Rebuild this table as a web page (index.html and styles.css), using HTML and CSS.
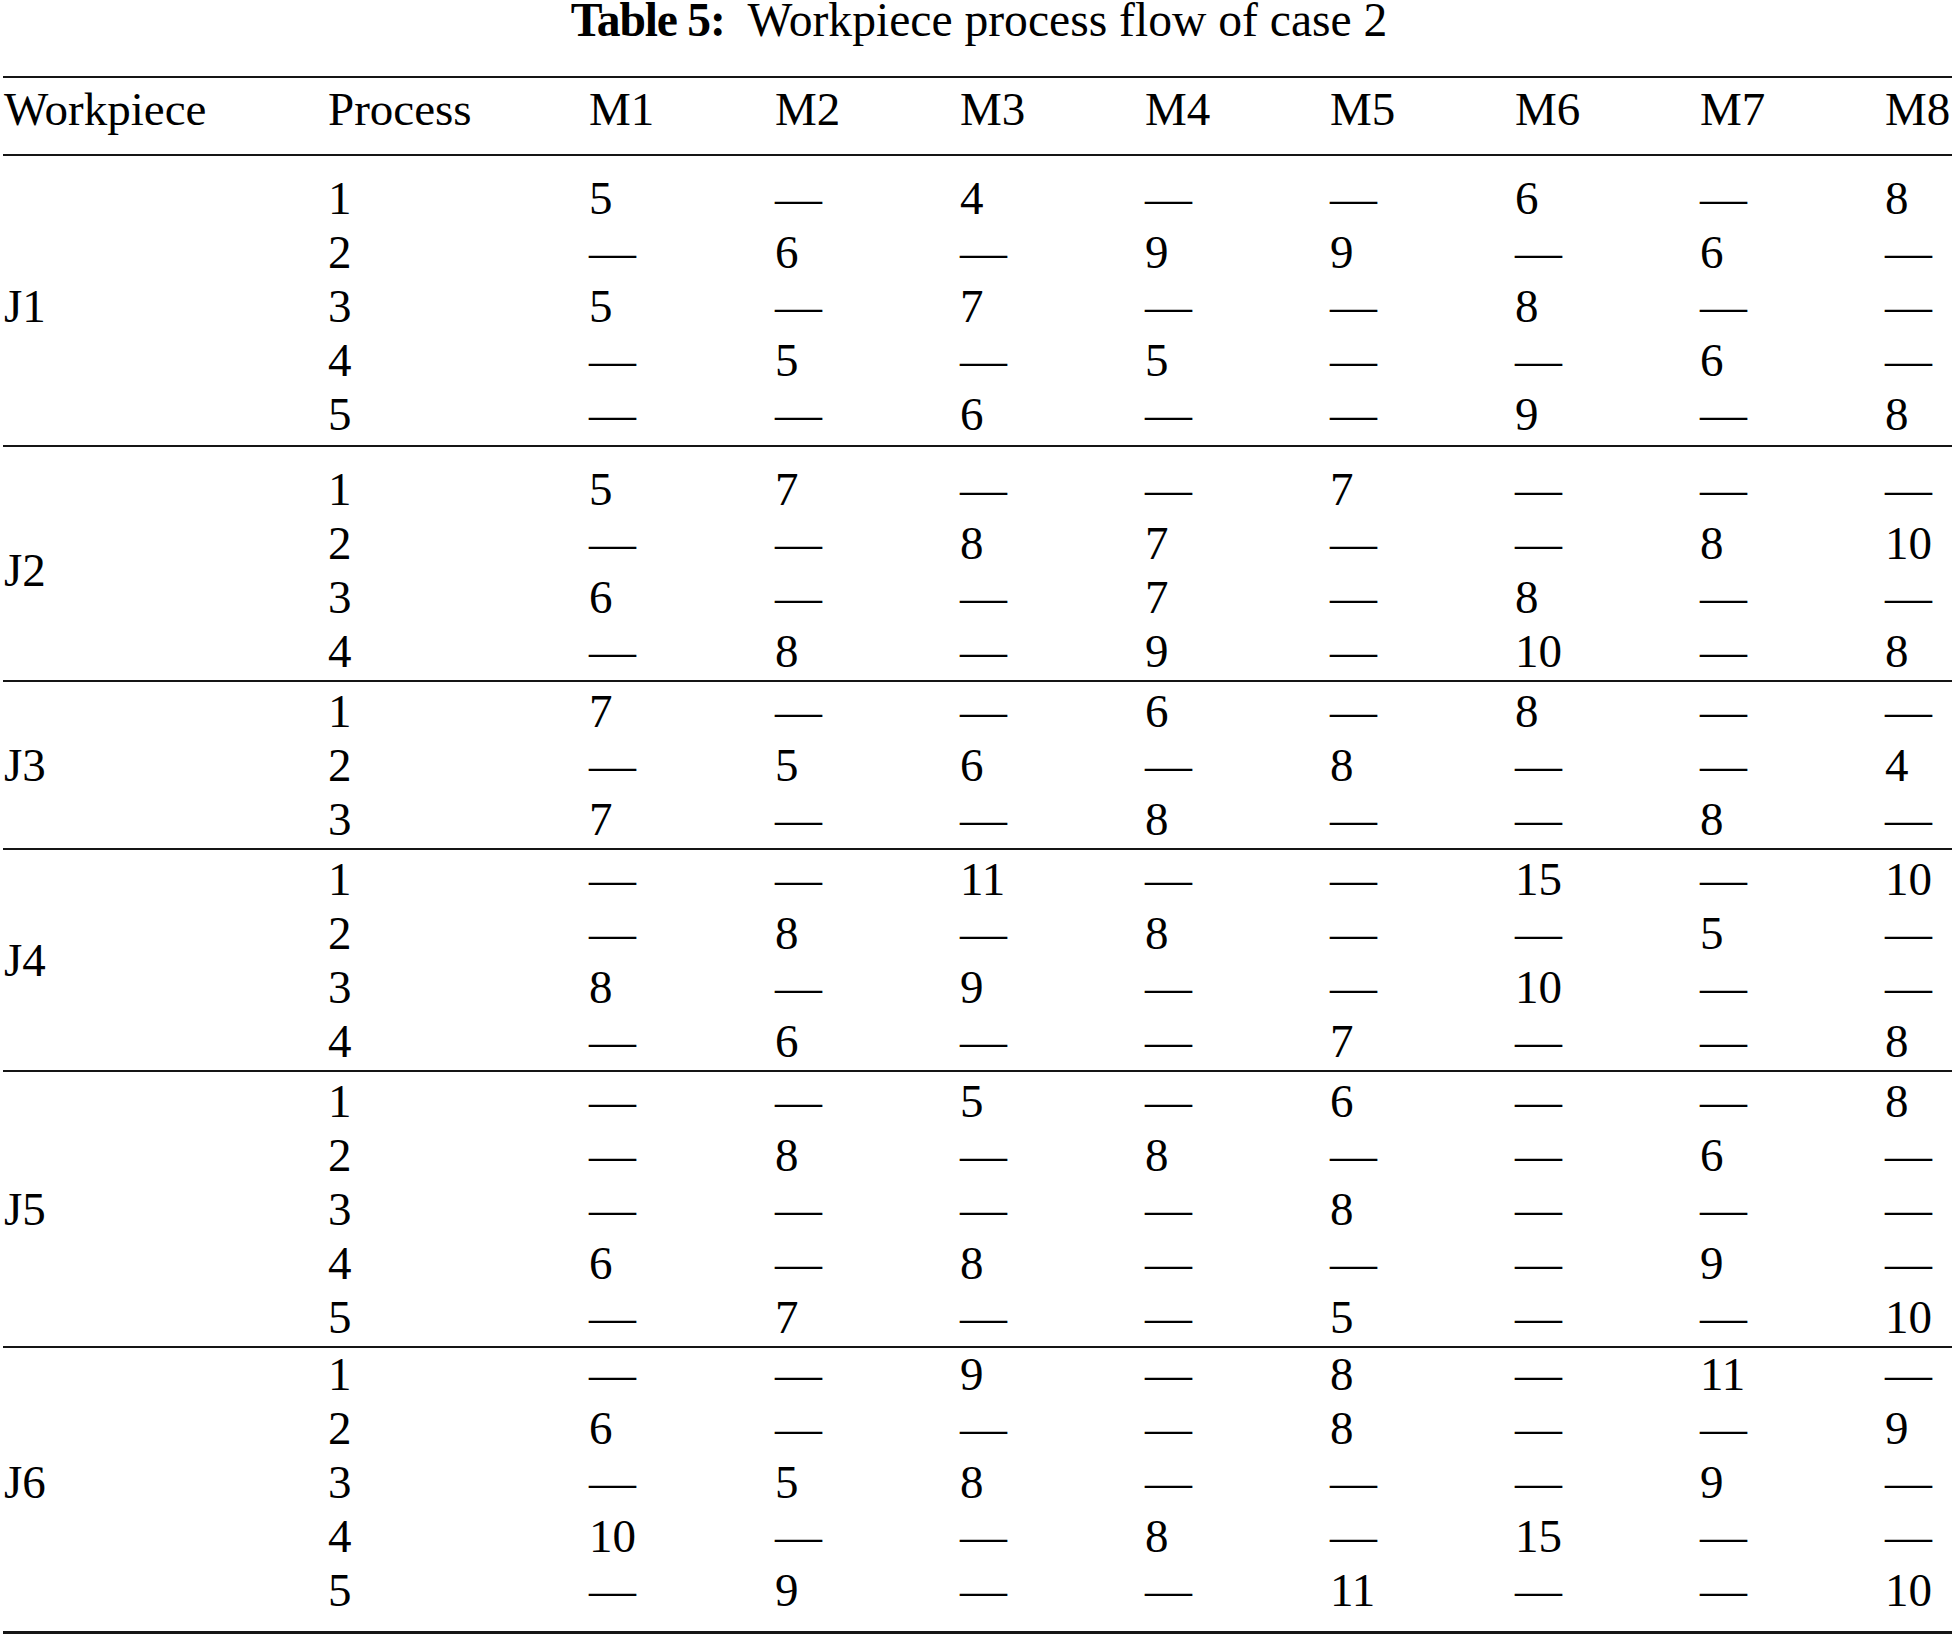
FILE: index.html
```html
<!DOCTYPE html>
<html lang="en">
<head>
<meta charset="utf-8">
<title>Table 5: Workpiece process flow of case 2</title>
<link rel="stylesheet" href="styles.css">
</head>
<body>
<p class="caption"><span class="caption-label">Table 5:</span> Workpiece process flow of case 2</p>
<table class="flow-table">
  <colgroup>
    <col class="c-wp"><col class="c-proc">
    <col class="c-m1"><col class="c-m"><col class="c-m"><col class="c-m"><col class="c-m"><col class="c-m"><col class="c-m7"><col class="c-m8">
  </colgroup>
  <thead>
    <tr><th>Workpiece</th><th>Process</th><th>M1</th><th>M2</th><th>M3</th><th>M4</th><th>M5</th><th>M6</th><th>M7</th><th>M8</th></tr>
  </thead>
  <tbody class="pad-top pad-first">
    <tr><td class="wp" rowspan="5">J1</td><td>1</td><td>5</td><td>—</td><td>4</td><td>—</td><td>—</td><td>6</td><td>—</td><td>8</td></tr>
    <tr><td>2</td><td>—</td><td>6</td><td>—</td><td>9</td><td>9</td><td>—</td><td>6</td><td>—</td></tr>
    <tr><td>3</td><td>5</td><td>—</td><td>7</td><td>—</td><td>—</td><td>8</td><td>—</td><td>—</td></tr>
    <tr><td>4</td><td>—</td><td>5</td><td>—</td><td>5</td><td>—</td><td>—</td><td>6</td><td>—</td></tr>
    <tr><td>5</td><td>—</td><td>—</td><td>6</td><td>—</td><td>—</td><td>9</td><td>—</td><td>8</td></tr>
  </tbody>
  <tbody class="pad-top">
    <tr><td class="wp" rowspan="4">J2</td><td>1</td><td>5</td><td>7</td><td>—</td><td>—</td><td>7</td><td>—</td><td>—</td><td>—</td></tr>
    <tr><td>2</td><td>—</td><td>—</td><td>8</td><td>7</td><td>—</td><td>—</td><td>8</td><td>10</td></tr>
    <tr><td>3</td><td>6</td><td>—</td><td>—</td><td>7</td><td>—</td><td>8</td><td>—</td><td>—</td></tr>
    <tr><td>4</td><td>—</td><td>8</td><td>—</td><td>9</td><td>—</td><td>10</td><td>—</td><td>8</td></tr>
  </tbody>
  <tbody>
    <tr><td class="wp" rowspan="3">J3</td><td>1</td><td>7</td><td>—</td><td>—</td><td>6</td><td>—</td><td>8</td><td>—</td><td>—</td></tr>
    <tr><td>2</td><td>—</td><td>5</td><td>6</td><td>—</td><td>8</td><td>—</td><td>—</td><td>4</td></tr>
    <tr><td>3</td><td>7</td><td>—</td><td>—</td><td>8</td><td>—</td><td>—</td><td>8</td><td>—</td></tr>
  </tbody>
  <tbody>
    <tr><td class="wp" rowspan="4">J4</td><td>1</td><td>—</td><td>—</td><td>11</td><td>—</td><td>—</td><td>15</td><td>—</td><td>10</td></tr>
    <tr><td>2</td><td>—</td><td>8</td><td>—</td><td>8</td><td>—</td><td>—</td><td>5</td><td>—</td></tr>
    <tr><td>3</td><td>8</td><td>—</td><td>9</td><td>—</td><td>—</td><td>10</td><td>—</td><td>—</td></tr>
    <tr><td>4</td><td>—</td><td>6</td><td>—</td><td>—</td><td>7</td><td>—</td><td>—</td><td>8</td></tr>
  </tbody>
  <tbody>
    <tr><td class="wp" rowspan="5">J5</td><td>1</td><td>—</td><td>—</td><td>5</td><td>—</td><td>6</td><td>—</td><td>—</td><td>8</td></tr>
    <tr><td>2</td><td>—</td><td>8</td><td>—</td><td>8</td><td>—</td><td>—</td><td>6</td><td>—</td></tr>
    <tr><td>3</td><td>—</td><td>—</td><td>—</td><td>—</td><td>8</td><td>—</td><td>—</td><td>—</td></tr>
    <tr><td>4</td><td>6</td><td>—</td><td>8</td><td>—</td><td>—</td><td>—</td><td>9</td><td>—</td></tr>
    <tr><td>5</td><td>—</td><td>7</td><td>—</td><td>—</td><td>5</td><td>—</td><td>—</td><td>10</td></tr>
  </tbody>
  <tbody class="pad-end">
    <tr><td class="wp" rowspan="5">J6</td><td>1</td><td>—</td><td>—</td><td>9</td><td>—</td><td>8</td><td>—</td><td>11</td><td>—</td></tr>
    <tr><td>2</td><td>6</td><td>—</td><td>—</td><td>—</td><td>8</td><td>—</td><td>—</td><td>9</td></tr>
    <tr><td>3</td><td>—</td><td>5</td><td>8</td><td>—</td><td>—</td><td>—</td><td>9</td><td>—</td></tr>
    <tr><td>4</td><td>10</td><td>—</td><td>—</td><td>8</td><td>—</td><td>15</td><td>—</td><td>—</td></tr>
    <tr><td>5</td><td>—</td><td>9</td><td>—</td><td>—</td><td>11</td><td>—</td><td>—</td><td>10</td></tr>
  </tbody>
</table>
</body>
</html>
```

FILE: styles.css
```css
html, body {
  margin: 0;
  padding: 0;
  background: #ffffff;
}

body {
  color: #000000;
  font-family: "Liberation Serif", "Times New Roman", serif;
  font-size: 47px;
}

.caption {
  margin: 0 0 36px;
  padding-left: 3px;
  font-size: 47.6px;
  line-height: 40px;
  text-align: center;
  white-space: nowrap;
}

.caption-label {
  font-weight: bold;
  letter-spacing: -1.2px;
  margin-right: 12px;
}

.flow-table {
  margin-left: 3px;
  width: 1949px;
  table-layout: fixed;
  border-collapse: collapse;
  border-top: 2px solid #151515;
  border-bottom: 3px solid #151515;
}

.c-wp { width: 324px; }
.c-proc { width: 261px; }
.c-m1 { width: 186px; }
.c-m { width: 185px; }
.c-m7 { width: 185px; }
.c-m8 { width: 68px; }

.flow-table th,
.flow-table td {
  padding: 0 0 0 1px;
  text-align: left;
  font-weight: normal;
  white-space: nowrap;
  vertical-align: top;
}

.flow-table th {
  line-height: 54px;
}

.flow-table td {
  line-height: 49px;
  padding-top: 5px;
}

.flow-table thead th {
  padding-top: 4px;
  padding-bottom: 18px;
  border-bottom: 2px solid #151515;
}

.flow-table tbody + tbody {
  border-top: 2px solid #151515;
}

.flow-table tbody tr:last-child td {
  padding-bottom: 4px;
}

.flow-table td.wp {
  vertical-align: middle;
  padding-bottom: 4px;
}

.flow-table tbody.pad-top tr:first-child td {
  padding-top: 18px;
}

.flow-table tbody.pad-first tr:last-child td,
.flow-table tbody.pad-first td.wp {
  padding-bottom: 6px;
}

.flow-table tbody.pad-end tr:first-child td {
  padding-top: 2px;
}

.flow-table tbody.pad-end tr:last-child td,
.flow-table tbody.pad-end td.wp {
  padding-bottom: 16px;
}
```
